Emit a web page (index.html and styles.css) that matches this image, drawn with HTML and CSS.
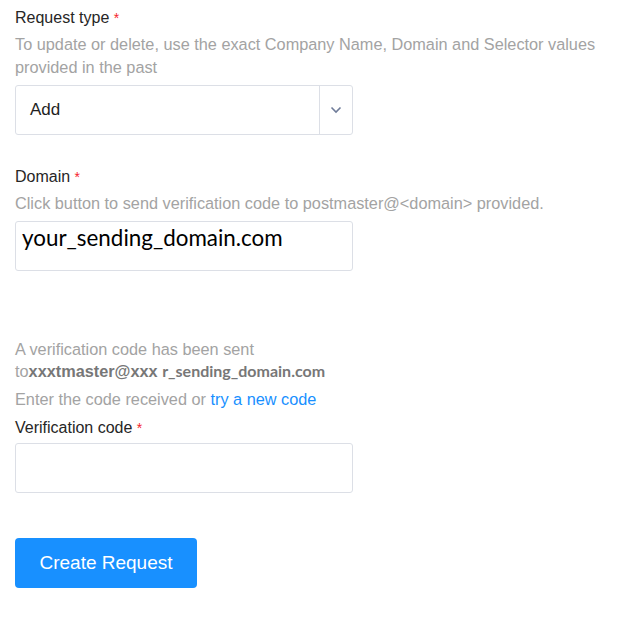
FILE: index.html
```html
<!DOCTYPE html>
<html lang="en">
<head>
    <meta charset="UTF-8">
    <title>Create Request</title>
    <link rel="stylesheet" href="styles.css">
</head>
<body>
    <form class="request-form">
        <div class="form-group">
            <label class="field-label">Request type <span class="req">*</span></label>
            <div class="help">To update or delete, use the exact Company Name, Domain and Selector values provided in the past</div>
            <div class="select">
                <span class="select-value">Add</span>
                <span class="select-arrow">
                    <svg width="12" height="8" viewBox="0 0 12 8"><path d="M1.5 1.5 L6 6 L10.5 1.5" fill="none" stroke="#6f7c99" stroke-width="1.6"/></svg>
                </span>
            </div>
        </div>

        <div class="form-group">
            <label class="field-label">Domain <span class="req">*</span></label>
            <div class="help">Click button to send verification code to postmaster@&lt;domain&gt; provided.</div>
            <div class="input domain-input">your_sending_domain.com</div>
        </div>

        <div class="verify">
            <div class="help sent">A verification code has been sent<br><span class="sent-to">to<b class="masked">xxxtmaster@xxx</b> <b class="masked-domain">r_sending_domain.com</b></span></div>
            <div class="help enter">Enter the code received or <a href="#" class="link">try a new code</a></div>
            <label class="field-label">Verification code <span class="req">*</span></label>
            <div class="input"></div>
        </div>

        <button type="button" class="btn-primary">Create Request</button>
    </form>
</body>
</html>
```

FILE: styles.css
```css
body {
    margin: 0;
    font-family: "Liberation Sans", Arial, sans-serif;
    background: #fff;
}
.request-form {
    padding: 6px 15px;
    width: 338px;
}
.form-group {
    margin-bottom: 30px;
}
.field-label {
    display: block;
    font-size: 16px;
    line-height: 23px;
    color: #262626;
}
.form-group .help {
    margin-top: 3px;
}
.req {
    color: #f5222d;
    font-size: 14px;
}
.help {
    font-size: 16.3px;
    line-height: 23px;
    color: #a3a3a3;
    width: 620px;
}
.select {
    display: flex;
    height: 50px;
    margin-top: 6px;
    border: 1px solid #dcdfe6;
    border-radius: 3px;
    box-sizing: border-box;
}
.select-value {
    flex: 1;
    display: flex;
    align-items: center;
    padding-left: 14px;
    font-size: 17px;
    color: #1f1f1f;
}
.select-arrow {
    width: 32px;
    display: flex;
    align-items: center;
    justify-content: center;
    border-left: 1px solid #dcdfe6;
}
.input {
    height: 50px;
    margin-top: 6px;
    border: 1px solid #dcdfe6;
    border-radius: 3px;
    box-sizing: border-box;
}
.domain-input {
    padding: 0 0 0 6px;
    font-family: Lato, "Open Sans", sans-serif;
    font-size: 22.4px;
    line-height: 32px;
    color: #000;
}
.verify {
    margin-top: 67px;
}
.sent {
    height: 45px;
}
.sent-to {
    position: relative;
    top: -2px;
}
.masked {
    color: #777;
}
.masked-domain {
    font-family: Lato, sans-serif;
    font-size: 16px;
    color: #777;
}
.enter {
    margin-top: 5px;
}
.link {
    color: #1890ff;
    text-decoration: none;
}
.verify .field-label {
    margin-top: 5px;
}
.verify .input {
    margin-top: 3px;
}
.btn-primary {
    margin-top: 45px;
    width: 182px;
    height: 50px;
    border: none;
    border-radius: 4px;
    background: #1890ff;
    color: #fff;
    font-family: "Liberation Sans", Arial, sans-serif;
    font-size: 19px;
}
```
